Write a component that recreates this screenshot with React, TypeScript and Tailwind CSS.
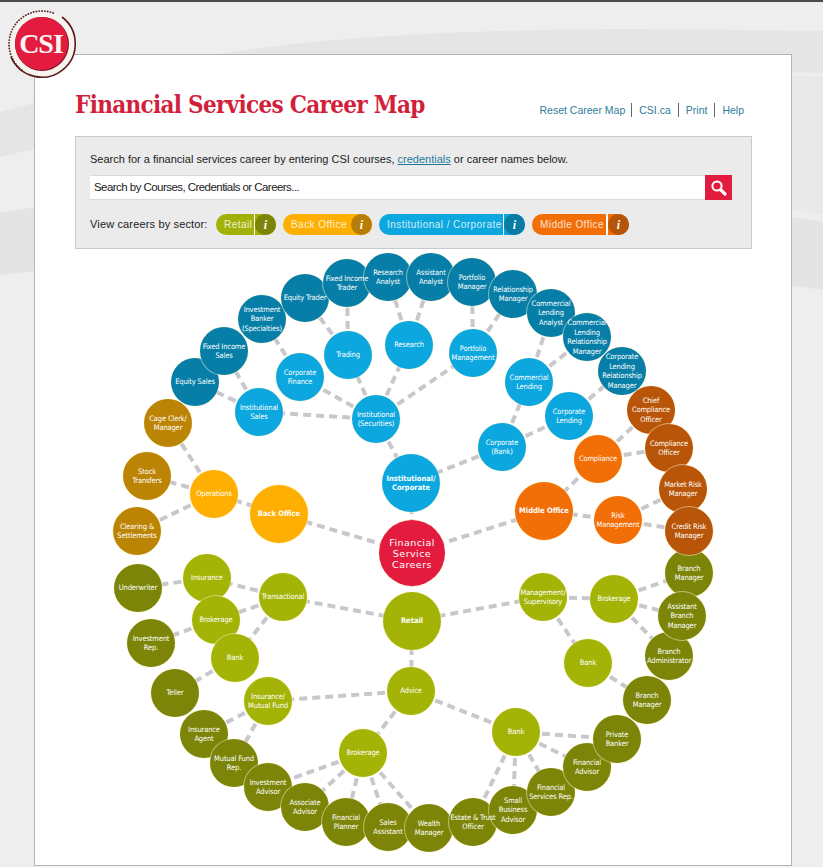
import React from 'react';

type Kind = 'red' | 'teal' | 'blue' | 'darkGold' | 'gold' | 'darkOrange' | 'orange' | 'darkOlive' | 'olive';

interface MapNode {
  id: string;
  x: number;
  y: number;
  kind: Kind;
  label: string;
  size?: 'major' | 'center';
}

const kindClass: Record<Kind, string> = {
  red: 'bg-[#e21b3f]',
  teal: 'bg-[#067ea7]',
  blue: 'bg-[#0ba7de]',
  darkGold: 'bg-[#bb8405]',
  gold: 'bg-[#ffaf02]',
  darkOrange: 'bg-[#b85508]',
  orange: 'bg-[#f26e07]',
  darkOlive: 'bg-[#7c8508]',
  olive: 'bg-[#a4b407]',
};

const nodes: MapNode[] = [
  { id: 'eqSales', x: 195, y: 382, kind: 'teal', label: 'Equity Sales' },
  { id: 'fiSales', x: 224, y: 351, kind: 'teal', label: 'Fixed Income\nSales' },
  { id: 'banker', x: 262, y: 319, kind: 'teal', label: 'Investment\nBanker\n(Specialties)' },
  { id: 'eqTrader', x: 305, y: 298, kind: 'teal', label: 'Equity Trader' },
  { id: 'fiTrader', x: 347, y: 283, kind: 'teal', label: 'Fixed Income\nTrader' },
  { id: 'resAnalyst', x: 388, y: 277, kind: 'teal', label: 'Research\nAnalyst' },
  { id: 'asstAnalyst', x: 431, y: 277, kind: 'teal', label: 'Assistant\nAnalyst' },
  { id: 'pfManager', x: 472, y: 282, kind: 'teal', label: 'Portfolio\nManager' },
  { id: 'relManager', x: 513, y: 294, kind: 'teal', label: 'Relationship\nManager' },
  { id: 'clAnalyst', x: 551, y: 313, kind: 'teal', label: 'Commercial\nLending\nAnalyst' },
  { id: 'clRel', x: 587, y: 337, kind: 'teal', label: 'Commercial\nLending\nRelationship\nManager' },
  { id: 'corpRel', x: 622, y: 371, kind: 'teal', label: 'Corporate\nLending\nRelationship\nManager' },
  { id: 'trading', x: 348, y: 355, kind: 'blue', label: 'Trading' },
  { id: 'research', x: 409, y: 345, kind: 'blue', label: 'Research' },
  { id: 'corpFin', x: 300, y: 377, kind: 'blue', label: 'Corporate\nFinance' },
  { id: 'instSales', x: 259, y: 412, kind: 'blue', label: 'Institutional\nSales' },
  { id: 'instSec', x: 376, y: 419, kind: 'blue', label: 'Institutional\n(Securities)' },
  { id: 'pfMgmt', x: 473, y: 353, kind: 'blue', label: 'Portfolio\nManagement' },
  { id: 'comLend', x: 529, y: 382, kind: 'blue', label: 'Commercial\nLending' },
  { id: 'corpLend', x: 569, y: 416, kind: 'blue', label: 'Corporate\nLending' },
  { id: 'corpBank', x: 502, y: 447, kind: 'blue', label: 'Corporate\n(Bank)' },
  { id: 'instCorp', x: 411, y: 483, kind: 'blue', label: 'Institutional/\nCorporate', size: 'major' },
  { id: 'chief', x: 651, y: 410, kind: 'darkOrange', label: 'Chief\nCompliance\nOfficer' },
  { id: 'compOfficer', x: 669, y: 448, kind: 'darkOrange', label: 'Compliance\nOfficer' },
  { id: 'market', x: 683, y: 489, kind: 'darkOrange', label: 'Market Risk\nManager' },
  { id: 'branchTop', x: 689, y: 573, kind: 'darkOlive', label: 'Branch\nManager' },
  { id: 'credit', x: 689, y: 531, kind: 'darkOrange', label: 'Credit Risk\nManager' },
  { id: 'compliance', x: 598, y: 459, kind: 'orange', label: 'Compliance' },
  { id: 'risk', x: 618, y: 520, kind: 'orange', label: 'Risk\nManagement' },
  { id: 'middle', x: 544, y: 511, kind: 'orange', label: 'Middle Office', size: 'major' },
  { id: 'cage', x: 168, y: 423, kind: 'darkGold', label: 'Cage Clerk/\nManager' },
  { id: 'stock', x: 147, y: 476, kind: 'darkGold', label: 'Stock\nTransfers' },
  { id: 'clearing', x: 137, y: 531, kind: 'darkGold', label: 'Clearing &\nSettlements' },
  { id: 'operations', x: 214, y: 494, kind: 'gold', label: 'Operations' },
  { id: 'back', x: 279, y: 514, kind: 'gold', label: 'Back Office', size: 'major' },
  { id: 'underwriter', x: 138, y: 588, kind: 'darkOlive', label: 'Underwriter' },
  { id: 'invRep', x: 151, y: 643, kind: 'darkOlive', label: 'Investment\nRep.' },
  { id: 'teller', x: 175, y: 693, kind: 'darkOlive', label: 'Teller' },
  { id: 'insAgent', x: 204, y: 734, kind: 'darkOlive', label: 'Insurance\nAgent' },
  { id: 'mfRep', x: 234, y: 763, kind: 'darkOlive', label: 'Mutual Fund\nRep.' },
  { id: 'invAdvisor', x: 268, y: 787, kind: 'darkOlive', label: 'Investment\nAdvisor' },
  { id: 'assocAdvisor', x: 305, y: 807, kind: 'darkOlive', label: 'Associate\nAdvisor' },
  { id: 'planner', x: 346, y: 822, kind: 'darkOlive', label: 'Financial\nPlanner' },
  { id: 'salesAsst', x: 388, y: 827, kind: 'darkOlive', label: 'Sales\nAssistant' },
  { id: 'wealth', x: 429, y: 828, kind: 'darkOlive', label: 'Wealth\nManager' },
  { id: 'estate', x: 473, y: 822, kind: 'darkOlive', label: 'Estate & Trust\nOfficer' },
  { id: 'small', x: 513, y: 810, kind: 'darkOlive', label: 'Small\nBusiness\nAdvisor' },
  { id: 'finServ', x: 551, y: 792, kind: 'darkOlive', label: 'Financial\nServices Rep.' },
  { id: 'finAdvisor', x: 587, y: 767, kind: 'darkOlive', label: 'Financial\nAdvisor' },
  { id: 'private', x: 617, y: 739, kind: 'darkOlive', label: 'Private\nBanker' },
  { id: 'branchLow', x: 647, y: 700, kind: 'darkOlive', label: 'Branch\nManager' },
  { id: 'branchAdmin', x: 669, y: 656, kind: 'darkOlive', label: 'Branch\nAdministrator' },
  { id: 'asstBranch', x: 682, y: 616, kind: 'darkOlive', label: 'Assistant\nBranch\nManager' },
  { id: 'insurance', x: 207, y: 578, kind: 'olive', label: 'Insurance' },
  { id: 'brokerL', x: 216, y: 620, kind: 'olive', label: 'Brokerage' },
  { id: 'bankL', x: 235, y: 658, kind: 'olive', label: 'Bank' },
  { id: 'transactional', x: 283, y: 597, kind: 'olive', label: 'Transactional' },
  { id: 'insMutual', x: 268, y: 701, kind: 'olive', label: 'Insurance/\nMutual Fund' },
  { id: 'brokerB', x: 363, y: 753, kind: 'olive', label: 'Brokerage' },
  { id: 'advice', x: 411, y: 691, kind: 'olive', label: 'Advice' },
  { id: 'bankB', x: 516, y: 732, kind: 'olive', label: 'Bank' },
  { id: 'mgmt', x: 543, y: 597, kind: 'olive', label: 'Management/\nSupervisory' },
  { id: 'brokerR', x: 614, y: 599, kind: 'olive', label: 'Brokerage' },
  { id: 'bankR', x: 588, y: 663, kind: 'olive', label: 'Bank' },
  { id: 'retail', x: 412, y: 621, kind: 'olive', label: 'Retail', size: 'major' },
  { id: 'center', x: 412, y: 553, kind: 'red', label: 'Financial\nService\nCareers', size: 'center' },
];

const edges: [string, string][] = [
  ['center', 'instCorp'], ['center', 'back'], ['center', 'middle'], ['center', 'retail'],
  ['instCorp', 'instSec'], ['instCorp', 'corpBank'],
  ['instSec', 'instSales'], ['instSec', 'corpFin'], ['instSec', 'trading'], ['instSec', 'research'], ['instSec', 'pfMgmt'],
  ['instSales', 'eqSales'], ['instSales', 'fiSales'], ['corpFin', 'banker'],
  ['trading', 'eqTrader'], ['trading', 'fiTrader'], ['research', 'resAnalyst'], ['research', 'asstAnalyst'],
  ['pfMgmt', 'pfManager'], ['pfMgmt', 'relManager'],
  ['corpBank', 'comLend'], ['corpBank', 'corpLend'], ['comLend', 'clAnalyst'], ['comLend', 'clRel'], ['corpLend', 'corpRel'],
  ['middle', 'compliance'], ['middle', 'risk'], ['compliance', 'chief'], ['compliance', 'compOfficer'],
  ['risk', 'market'], ['risk', 'credit'],
  ['back', 'operations'], ['operations', 'cage'], ['operations', 'stock'], ['operations', 'clearing'],
  ['retail', 'transactional'], ['retail', 'mgmt'], ['retail', 'advice'],
  ['transactional', 'insurance'], ['transactional', 'brokerL'], ['transactional', 'bankL'],
  ['insurance', 'underwriter'], ['brokerL', 'invRep'], ['bankL', 'teller'],
  ['advice', 'insMutual'], ['advice', 'brokerB'], ['advice', 'bankB'],
  ['insMutual', 'insAgent'], ['insMutual', 'mfRep'],
  ['brokerB', 'invAdvisor'], ['brokerB', 'assocAdvisor'], ['brokerB', 'planner'], ['brokerB', 'salesAsst'], ['brokerB', 'wealth'],
  ['bankB', 'estate'], ['bankB', 'small'], ['bankB', 'finServ'], ['bankB', 'finAdvisor'], ['bankB', 'private'],
  ['mgmt', 'brokerR'], ['mgmt', 'bankR'], ['bankR', 'branchLow'],
  ['brokerR', 'branchTop'], ['brokerR', 'asstBranch'], ['brokerR', 'branchAdmin'],
];

// page coordinates of the map box, node data above is in page pixels
const MAP_X = 75;
const MAP_Y = 249;

function radius(n: MapNode) {
  if (n.size === 'center') return 33;
  if (n.size === 'major') return 29;
  return 24;
}

function NodeCircle({ node }: { node: MapNode }) {
  const r = radius(node);
  return (
    <div
      className={`absolute rounded-full ring-1 ring-[#fff8d0]/50 ${kindClass[node.kind]}`}
      style={{ left: node.x - MAP_X - r, top: node.y - MAP_Y - r, width: r * 2, height: r * 2 }}
    ></div>
  );
}

// labels sit above every circle: the neighbours overlap but the text is never cut off
function NodeLabel({ node }: { node: MapNode }) {
  const r = radius(node);
  const textClass =
    node.size === 'center'
      ? "font-['DejaVu_Sans',sans-serif] text-[9.5px] leading-[11px] tracking-[0.45px]"
      : node.size === 'major'
        ? "font-['DejaVu_Sans',sans-serif] [font-stretch:condensed] text-[7.5px] leading-[9.5px] font-bold"
        : "font-['DejaVu_Sans',sans-serif] [font-stretch:condensed] text-[7.5px] leading-[9.5px] tracking-[-0.15px]";
  return (
    <div
      className={`absolute flex items-center justify-center text-center text-white ${textClass}`}
      style={{ left: node.x - MAP_X - r, top: node.y - MAP_Y - r, width: r * 2, height: r * 2 }}
    >
      <span className="whitespace-pre">{node.label}</span>
    </div>
  );
}

function CareerMap() {
  const byId = Object.fromEntries(nodes.map((n) => [n.id, n]));
  return (
    <div className="relative h-[616px] w-[677px]">
      <svg className="absolute inset-0" width="677" height="616" fill="none">
        {edges.map(([a, b]) => (
          <line
            key={a + b}
            x1={byId[a].x - MAP_X}
            y1={byId[a].y - MAP_Y}
            x2={byId[b].x - MAP_X}
            y2={byId[b].y - MAP_Y}
            stroke="#c8c8cc"
            strokeWidth="4"
            strokeDasharray="8 5"
          />
        ))}
      </svg>
      {nodes.map((n) => (
        <NodeCircle key={n.id} node={n} />
      ))}
      {nodes.map((n) => (
        <NodeLabel key={n.id} node={n} />
      ))}
    </div>
  );
}

function SectorPill({ label, pill, info, width, sep }: { label: string; pill: string; info: string; width: string; sep?: string }) {
  return (
    <div className={`flex h-[21px] items-center rounded-full ${pill} ${width}`}>
      <span className="flex-1 whitespace-nowrap pl-2 text-[10px] tracking-[0.45px] text-white/80">{label}</span>
      <span className={`h-full shrink-0 bg-white ${sep ?? 'w-0'}`}></span>
      <span className={`flex h-[21px] w-[21px] shrink-0 items-center justify-center rounded-full font-['Liberation_Serif',serif] text-[12px] font-bold italic leading-none text-white ${info}`}>
        i
      </span>
    </div>
  );
}

function Logo() {
  const dots = Array.from({ length: 34 }, (_, i) => {
    const a = ((128 + i * 4.9) * Math.PI) / 180;
    return { cx: 42 + 33 * Math.cos(a), cy: 44 + 33 * Math.sin(a) };
  });
  return (
    <svg className="absolute left-0 top-0" width="82" height="84" viewBox="0 0 82 84">
      <circle cx="42" cy="44" r="33" fill="#f7f4f0" />
      <path d="M11 57 A33.5 33.5 0 1 0 62 17" fill="none" stroke="#5e1a1f" strokeWidth="1.6" />
      {dots.map((d, i) => (
        <circle key={i} cx={d.cx} cy={d.cy} r="0.95" fill="#5a2428" />
      ))}
      <circle cx="42" cy="44" r="27" fill="#7d1024" />
      <circle cx="41.5" cy="43.5" r="26.5" fill="#e21b3f" />
      <text x="41" y="53" textAnchor="middle" fill="#fbf3ef" fontFamily="Liberation Serif, serif" fontWeight="700" fontSize="28" letterSpacing="-1">
        CSI
      </text>
    </svg>
  );
}

export default function App() {
  return (
    <div className="relative h-[867px] w-[823px] overflow-hidden bg-[#eeeeee] font-['Liberation_Sans',sans-serif]">
      <div className="h-[2px] bg-[#4a4a4a]"></div>
      <svg className="absolute inset-0" width="823" height="867" fill="none">
        <path d="M0 112 L220 54 C340 34 500 29 640 29 L823 31 L823 73 C500 60 200 110 0 157 Z" fill="#e5e5e5" />
        <path d="M792 76 L823 76 L823 215 L792 209 Z" fill="#e9e9e9" />
        <path d="M0 213 C250 170 550 180 823 222 L823 290 C550 250 250 245 0 275 Z" fill="#e4e4e4" />
      </svg>

      <div className="relative ml-[34px] mt-[52px] h-[812px] w-[758px] border border-[#b4b4b4] bg-white pl-10 pr-[39px]">
        <div className="flex h-[81px] items-end justify-between pb-[13px]">
          <h1 className="font-['DejaVu_Serif',serif] text-[24px] font-bold leading-[36px] tracking-[-0.7px] text-[#d21f3c] [font-stretch:condensed]">
            Financial Services Career Map
          </h1>
          <nav className="mr-[8px] flex items-center pb-[6px] text-[10.5px] leading-[14px] text-[#2f7d9b]">
            <a className="border-r border-[#666] pr-[6px]">Reset Career Map</a>
            <a className="border-r border-[#666] px-[7px]">CSI.ca</a>
            <a className="border-r border-[#666] px-[7px]">Print</a>
            <a className="pl-[7px]">Help</a>
          </nav>
        </div>

        <section className="h-[113px] border border-[#c9c9c9] bg-[#ebebeb] px-[14px] pt-[15px]">
          <p className="text-[11px] leading-[14px] text-[#222]">
            Search for a financial services career by entering CSI courses, <a className="text-[#1f7a9c] underline">credentials</a> or career names below.
          </p>
          <div className="mt-[9px] flex h-[25px] w-[642px]">
            <div className="flex flex-1 items-center border-b border-t border-[#dadada] bg-white pl-1 text-[11.5px] tracking-[-0.55px] text-[#222]">
              Search by Courses, Credentials or Careers...
            </div>
            <button className="flex w-[27px] items-center justify-center bg-[#e21b3f]">
              <svg width="17" height="17" viewBox="0 0 17 17" fill="none" stroke="#fff">
                <circle cx="7" cy="7" r="4.6" strokeWidth="2" />
                <path d="M10.6 10.6 L15 15" strokeWidth="3.2" strokeLinecap="round" />
              </svg>
            </button>
          </div>
          <div className="mt-[14px] flex items-center">
            <span className="w-[126px] text-[11px] tracking-[0.15px] text-[#222]">View careers by sector:</span>
            <div className="flex gap-[7px]">
              <SectorPill label="Retail" pill="bg-[#a2b109]" info="bg-[#7c8508]" width="w-[60px]" sep="w-px" />
              <SectorPill label="Back Office" pill="bg-[#ffaf02]" info="bg-[#b87d05]" width="w-[89px]" />
              <SectorPill label="Institutional / Corporate" pill="bg-[#0ba7de]" info="bg-[#0a7ba3]" width="w-[146px]" sep="w-px" />
              <SectorPill label="Middle Office" pill="bg-[#f26e07]" info="bg-[#b5550a]" width="w-[97px]" sep="w-[2px]" />
            </div>
          </div>
        </section>

        <CareerMap />
      </div>

      <Logo />
    </div>
  );
}
